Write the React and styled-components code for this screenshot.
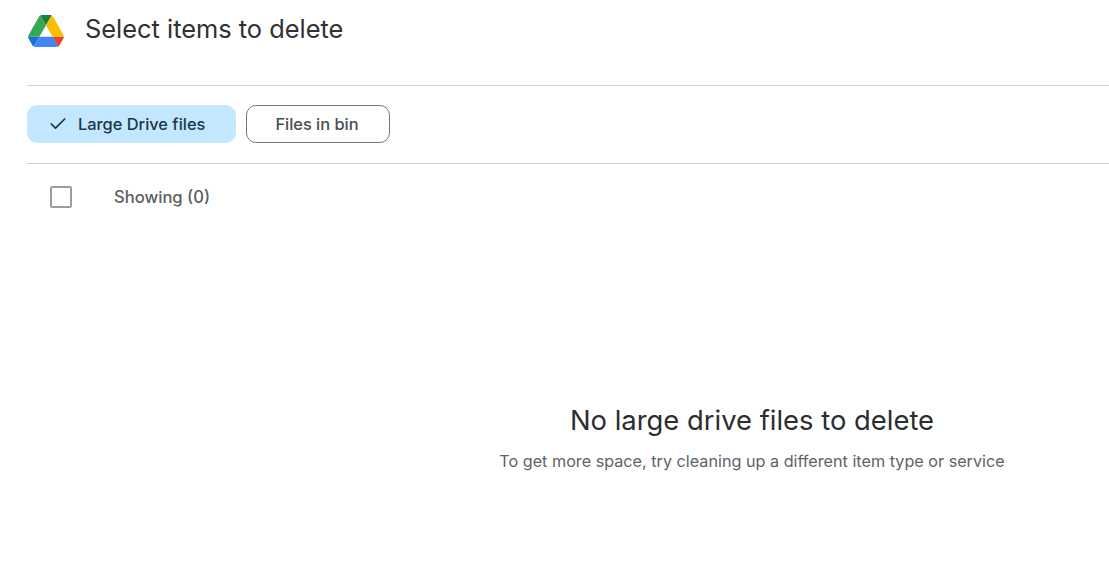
import styled, { createGlobalStyle } from "styled-components";
import { Check } from "lucide-react";

const GlobalStyle = createGlobalStyle`
  html, body {
    margin: 0;
    padding: 0;
    background: #fff;
    overflow: hidden;
  }
  body {
    font-family: Inter, Roboto, "Liberation Sans", sans-serif;
    color: #202124;
  }
`;

const Page = styled.div`
  width: 1109px;
  height: 570px;
  padding-left: 27px;
  box-sizing: border-box;
  overflow: hidden;
`;

const Header = styled.header`
  display: flex;
  align-items: center;
  gap: 21px;
  height: 86px;
  padding: 0 0 28px 1px;
  box-sizing: border-box;
  border-bottom: 1px solid #d0d2d4;
`;

const Logo = styled.svg`
  margin-top: 4px;
`;

const Title = styled.h1`
  margin: 0;
  font-size: 25.4px;
  font-weight: 400;
  color: #303134;
`;

const ChipRow = styled.div`
  display: flex;
  gap: 10px;
  height: 78px;
  padding-top: 19px;
  box-sizing: border-box;
  border-bottom: 1px solid #d0d2d4;
`;

const Chip = styled.button`
  display: flex;
  align-items: center;
  justify-content: ${(p) => (p.$selected ? "flex-start" : "center")};
  gap: 10px;
  height: 38px;
  padding: ${(p) => (p.$selected ? "0 0 0 21px" : "0 2px 0 0")};
  width: ${(p) => p.$width}px;
  box-sizing: border-box;
  border-radius: 10px;
  border: ${(p) => (p.$selected ? "none" : "1px solid #74777a")};
  background: ${(p) => (p.$selected ? "#c2e7ff" : "#fff")};
  color: ${(p) => (p.$selected ? "#1f3547" : "#4a4d50")};
  font-family: inherit;
  font-size: 16.4px;
  font-weight: 500;
`;

const ListHead = styled.div`
  display: flex;
  align-items: center;
  gap: 42px;
  padding: 22px 0 0 23px;
`;

const Box = styled.span`
  display: block;
  width: 22px;
  height: 22px;
  box-sizing: border-box;
  border: 2px solid #9a9c9f;
  border-radius: 2px;
`;

const Showing = styled.span`
  font-size: 16.6px;
  font-weight: 500;
  line-height: 20px;
  color: #5a5d60;
`;

const EmptyState = styled.section`
  display: flex;
  flex-direction: column;
  align-items: center;
  padding: 195px 0 0 368px;
`;

const EmptyTitle = styled.h2`
  margin: 0;
  font-size: 27.4px;
  font-weight: 400;
  color: #2b2d30;
`;

const EmptyText = styled.p`
  margin: 14px 0 0;
  font-size: 16.2px;
  color: #606366;
`;

const DriveLogo = () => (
  <Logo width="36" height="32" viewBox="0 0 87.3 78" aria-hidden="true">
    <path d="m6.6 66.85 3.85 6.65c.8 1.4 1.95 2.5 3.3 3.3l13.75-23.8h-27.5c0 1.55.4 3.1 1.2 4.5z" fill="#1a6fd8" />
    <path d="m43.65 25-13.75-23.8c-1.35.8-2.5 1.9-3.3 3.3l-25.4 44a9.06 9.06 0 0 0 -1.2 4.5h27.5z" fill="#34a853" />
    <path d="m73.55 76.8c1.35-.8 2.5-1.9 3.3-3.3l1.6-2.75 7.65-13.25c.8-1.4 1.2-2.95 1.2-4.5h-27.502l5.852 11.5z" fill="#ea4335" />
    <path d="m43.65 25 13.75-23.8c-1.35-.8-2.9-1.2-4.5-1.2h-18.5c-1.6 0-3.15.45-4.5 1.2z" fill="#188038" />
    <path d="m59.8 53h-32.3l-13.75 23.8c1.35.8 2.9 1.2 4.5 1.2h50.8c1.6 0 3.15-.45 4.5-1.2z" fill="#4285f4" />
    <path d="m73.4 26.5-12.7-22c-.8-1.4-1.95-2.5-3.3-3.3l-13.75 23.8 16.15 28h27.45c0-1.55-.4-3.1-1.2-4.5z" fill="#fbbc04" />
  </Logo>
);

const App = () => (
  <Page>
    <GlobalStyle />
    <Header>
      <DriveLogo />
      <Title>Select items to delete</Title>
    </Header>
    <ChipRow>
      <Chip $selected $width={209}>
        <Check size={20} strokeWidth={2.1} />
        Large Drive files
      </Chip>
      <Chip $width={144}>Files in bin</Chip>
    </ChipRow>
    <ListHead>
      <Box />
      <Showing>Showing (0)</Showing>
    </ListHead>
    <EmptyState>
      <EmptyTitle>No large drive files to delete</EmptyTitle>
      <EmptyText>To get more space, try cleaning up a different item type or service</EmptyText>
    </EmptyState>
  </Page>
);

export default App;
